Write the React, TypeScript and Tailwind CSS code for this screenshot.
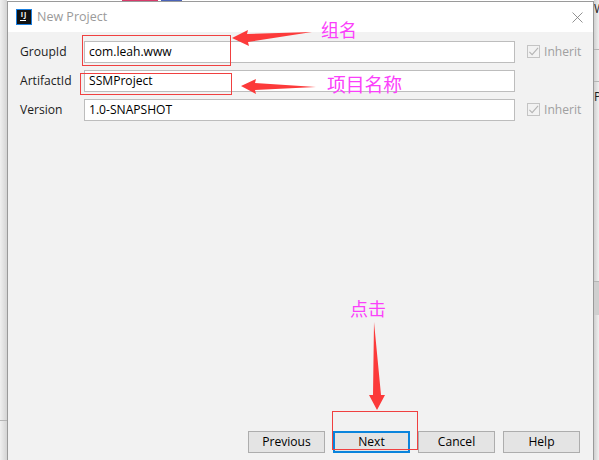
const FONT = '"Open Sans", "Noto Sans", "Liberation Sans", sans-serif';

function Inherit() {
  return (
    <div className="flex items-center gap-[4px] text-[12.1px] text-[#a0a0a0]">
      <span className="flex h-[13px] w-[13px] items-center justify-center border border-[#c4c4c4] bg-[#f2f2f2]">
        <svg viewBox="0 0 12 12" className="h-[11px] w-[11px]" fill="none" stroke="#b4b4b4" strokeWidth="1.2">
          <path d="M1.5 6.5 L4.5 9.5 L11 2" />
        </svg>
      </span>
      Inherit
    </div>
  );
}

function Field({ label, value, inherit }: { label: string; value: string; inherit?: boolean }) {
  return (
    <div className="flex h-[22px] items-center">
      <span className="w-[64px] text-[12.1px] text-[#1c1c1c]">{label}</span>
      <div className="flex h-[22px] w-[431px] items-center border border-[#bdbdbd] bg-white pl-[4px] text-[12.1px] text-black">
        {value}
      </div>
      {inherit && (
        <div className="ml-[12px]">
          <Inherit />
        </div>
      )}
    </div>
  );
}

function Btn({ label, focused }: { label: string; focused?: boolean }) {
  return (
    <div
      className={
        focused
          ? "flex h-[22px] w-[77px] items-center justify-center border-2 border-[#0a84dc] bg-[#e4e4e4] text-[12.1px] text-black"
          : "flex h-[22px] w-[77px] items-center justify-center border border-[#adadad] bg-[#e4e4e4] text-[12.1px] text-black"
      }
    >
      {label}
    </div>
  );
}

export default function App() {
  return (
    <div className="relative flex h-[460px] w-[599px] overflow-hidden bg-white" style={{ fontFamily: FONT }}>
      {/* window behind, left */}
      <div className="flex w-[7px] flex-col bg-gradient-to-r from-[#f0f0f0] to-[#d4d4d4]">
        <div className="mt-[420px] h-px bg-[#b5b5b5]" />
      </div>

      {/* dialog */}
      <div className="mt-px flex h-[459px] w-[587px] flex-col border-x border-t border-[#9a9a9a] bg-[#f2f2f2]">
        <div className="flex h-[30px] items-center bg-white pl-[8px] pr-[10px]">
          <div className="flex h-[16px] w-[16px] flex-col items-center border border-[#1a7fe0] bg-[#111]">
            <span className="mt-[1px] text-[7px] font-bold leading-[8px] tracking-[1px] text-white">IJ</span>
            <span className="ml-[-3px] mt-[1px] h-px w-[6px] bg-white" />
          </div>
          <span className="ml-[5px] text-[12.5px] text-[#9a9a9a]">New Project</span>
          <svg viewBox="0 0 11 11" className="ml-auto h-[11px] w-[11px]" stroke="#777" strokeWidth="0.8">
            <path d="M0.5 0.5 L10.5 10.5 M10.5 0.5 L0.5 10.5" />
          </svg>
        </div>

        <div className="flex flex-col gap-[7px] pl-[12px] pt-[9px]">
          <Field label="GroupId" value="com.leah.www" inherit />
          <Field label="ArtifactId" value="SSMProject" />
          <Field label="Version" value="1.0-SNAPSHOT" inherit />
        </div>

        <div className="mt-auto mb-[7px] flex justify-end gap-[8px] pr-[13px]">
          <Btn label="Previous" />
          <Btn label="Next" focused />
          <Btn label="Cancel" />
          <Btn label="Help" />
        </div>
      </div>

      {/* window behind, right */}
      <div className="relative w-[5px] overflow-hidden bg-gradient-to-r from-[#d0d0d0] to-[#f0f0f0]">
        <div className="absolute left-0 top-[49px] h-px w-full bg-[#b5b5b5]" />
        <div className="absolute left-0 top-[81px] h-px w-full bg-[#b5b5b5]" />
        <div className="absolute left-0 top-[281px] h-[34px] w-full border-t border-[#b5b5b5] bg-[#cfcfcf]" />
        <span className="absolute left-0 top-[2px] text-[12px] leading-[14px] text-[#1c1c1c]">W</span>
        <span className="absolute left-0 top-[90px] text-[12px] leading-[14px] text-[#1c1c1c]">P</span>
      </div>

      {/* tabs peeking out above the dialog */}
      <div className="absolute left-[122px] top-0 h-px w-[36px] bg-[#d83a6a]" />
      <div className="absolute left-[161px] top-0 h-px w-[21px] bg-[#4a63b8]" />

      {/* annotations */}
      <div className="absolute left-[82px] top-[35px] h-[31px] w-[149px] border border-[#f04040]" />
      <div className="absolute left-[80px] top-[73px] h-[22px] w-[152px] border border-[#f04040]" />
      <div className="absolute left-[332px] top-[411px] h-[39px] w-[86px] border border-[#f04040]" />

      <svg className="absolute left-0 top-0 h-[460px] w-[599px]" viewBox="0 0 599 460" fill="#fc3a3a">
        <polygon points="232,38 248,30 247,34 312,32 248,42 249,46" />
        <polygon points="241,86 256,79 255,83 316,87 255,90 256,94" />
        <polygon points="374,322 381,395 385,395 377,410 369,395 373,395" />
      </svg>

      <span
        className="absolute left-[321px] top-[17px] text-[18px] leading-[24px] text-[#fb3ffb]"
        style={{ fontFamily: '"Noto Sans CJK SC", sans-serif', fontWeight: 400 }}
      >
        组名
      </span>
      <span
        className="absolute left-[327px] top-[72px] text-[18.8px] leading-[24px] text-[#fb3ffb]"
        style={{ fontFamily: '"Noto Sans CJK SC", sans-serif', fontWeight: 400 }}
      >
        项目名称
      </span>
      <span
        className="absolute left-[350px] top-[296px] text-[18px] leading-[24px] text-[#fb3ffb]"
        style={{ fontFamily: '"Noto Sans CJK SC", sans-serif', fontWeight: 400 }}
      >
        点击
      </span>
    </div>
  );
}
